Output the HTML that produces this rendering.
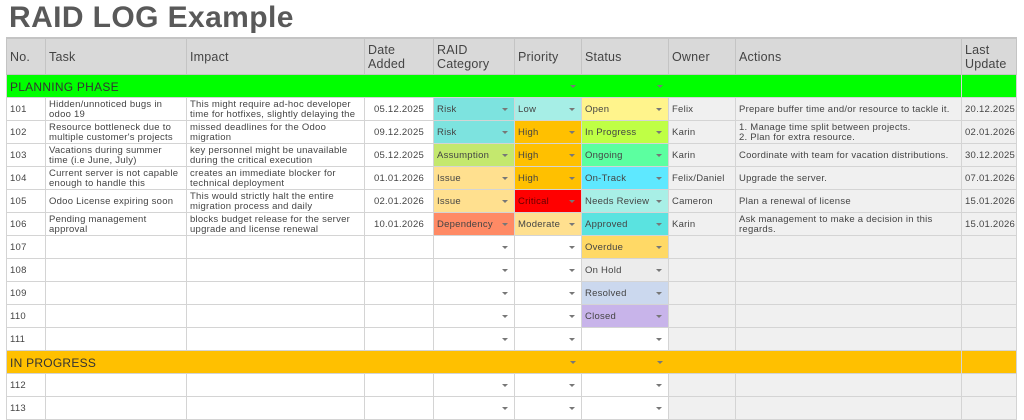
<!DOCTYPE html>
<html><head><meta charset="utf-8"><style>
*{margin:0;padding:0;box-sizing:border-box}
body{width:1024px;height:419px;overflow:hidden;background:#fff;font-family:"Liberation Sans",sans-serif;color:#444}
h1{position:absolute;left:9px;top:1px;font-size:30px;font-weight:bold;color:#595959;letter-spacing:0.4px}
table{position:absolute;left:6px;top:37px;border-collapse:collapse;table-layout:fixed;width:1010px;font-size:9.5px;letter-spacing:0.25px}
td,th{border:1px solid #d4d4d4;height:23px;padding:2px 3px 0;overflow:hidden;white-space:nowrap;position:relative;line-height:10px;color:#444;vertical-align:middle}
th{background:#d9d9d9;font-weight:normal;text-align:left;font-size:12.5px;line-height:14px;height:36px;border:1px solid #c4c4c4;border-top:2px solid #c4c4c4;color:#444;letter-spacing:0.2px;padding-top:1px}
.g td{background:#00ff00;font-size:12px;color:#333}
.o td{background:#ffc000;font-size:12px;color:#333}
.gr{background:#f0f0f0}
.dt{text-align:center}
.dd:after{content:"";position:absolute;right:6px;top:10px;border-left:3px solid transparent;border-right:3px solid transparent;border-top:3px solid #777}
</style></head><body>
<h1>RAID LOG Example</h1>
<table>
<colgroup><col style="width:39px"><col style="width:141px"><col style="width:178px"><col style="width:69px"><col style="width:81px"><col style="width:67px"><col style="width:87px"><col style="width:67px"><col style="width:226px"><col style="width:55px"></colgroup>
<tr><th>No.</th><th>Task</th><th>Impact</th><th>Date<br>Added</th><th>RAID<br>Category</th><th>Priority</th><th>Status</th><th>Owner</th><th>Actions</th><th>Last<br>Update</th></tr>
<tr class="g"><td colspan="5" style="border-right:none">PLANNING PHASE</td><td class="dd" style="border:none"></td><td class="dd" style="border:none"></td><td colspan="2" style="border-left:none"></td><td></td></tr>
<tr><td>101</td><td>Hidden/unnoticed bugs in<br>odoo 19</td><td>This might require ad-hoc developer<br>time for hotfixes, slightly delaying the</td><td class="dt">05.12.2025</td><td class="dd" style="background:#7de3df">Risk</td><td class="dd" style="background:#a6eee6">Low</td><td class="dd" style="background:#fff48c">Open</td><td class="gr">Felix</td><td class="gr">Prepare buffer time and/or resource to tackle it.</td><td class="gr">20.12.2025</td></tr>
<tr><td>102</td><td>Resource bottleneck due to<br>multiple customer's projects</td><td>missed deadlines for the Odoo<br>migration</td><td class="dt">09.12.2025</td><td class="dd" style="background:#7de3df">Risk</td><td class="dd" style="background:#ffc000">High</td><td class="dd" style="background:#bfff45">In Progress</td><td class="gr">Karin</td><td class="gr">1. Manage time split between projects.<br>2. Plan for extra resource.</td><td class="gr">02.01.2026</td></tr>
<tr><td>103</td><td>Vacations during summer<br>time (i.e June, July)</td><td>key personnel might be unavailable<br>during the critical execution</td><td class="dt">05.12.2025</td><td class="dd" style="background:#c4e86e">Assumption</td><td class="dd" style="background:#ffc000">High</td><td class="dd" style="background:#5cffa0">Ongoing</td><td class="gr">Karin</td><td class="gr">Coordinate with team for vacation distributions.</td><td class="gr">30.12.2025</td></tr>
<tr><td>104</td><td>Current server is not capable<br>enough to handle this</td><td>creates an immediate blocker for<br>technical deployment</td><td class="dt">01.01.2026</td><td class="dd" style="background:#ffe08f">Issue</td><td class="dd" style="background:#ffc000">High</td><td class="dd" style="background:#5ee8ff">On-Track</td><td class="gr">Felix/Daniel</td><td class="gr">Upgrade the server.</td><td class="gr">07.01.2026</td></tr>
<tr><td>105</td><td>Odoo License expiring soon</td><td>This would strictly halt the entire<br>migration process and daily</td><td class="dt">02.01.2026</td><td class="dd" style="background:#ffe08f">Issue</td><td class="dd" style="background:#ff0000;color:#600">Critical</td><td class="dd" style="background:#a8efe6">Needs Review</td><td class="gr">Cameron</td><td class="gr">Plan a renewal of license</td><td class="gr">15.01.2026</td></tr>
<tr><td>106</td><td>Pending management<br>approval</td><td>blocks budget release for the server<br>upgrade and license renewal</td><td class="dt">10.01.2026</td><td class="dd" style="background:#ff8a65">Dependency</td><td class="dd" style="background:#ffe08f">Moderate</td><td class="dd" style="background:#5ae3e0">Approved</td><td class="gr">Karin</td><td class="gr">Ask management to make a decision in this<br>regards.</td><td class="gr">15.01.2026</td></tr>
<tr><td>107</td><td></td><td></td><td></td><td class="dd"></td><td class="dd"></td><td class="dd" style="background:#ffd966">Overdue</td><td class="gr"></td><td class="gr"></td><td class="gr"></td></tr>
<tr><td>108</td><td></td><td></td><td></td><td class="dd"></td><td class="dd"></td><td class="dd" style="background:#ececec">On Hold</td><td class="gr"></td><td class="gr"></td><td class="gr"></td></tr>
<tr><td>109</td><td></td><td></td><td></td><td class="dd"></td><td class="dd"></td><td class="dd" style="background:#cbd8ee">Resolved</td><td class="gr"></td><td class="gr"></td><td class="gr"></td></tr>
<tr><td>110</td><td></td><td></td><td></td><td class="dd"></td><td class="dd"></td><td class="dd" style="background:#c8b4ea">Closed</td><td class="gr"></td><td class="gr"></td><td class="gr"></td></tr>
<tr><td>111</td><td></td><td></td><td></td><td class="dd"></td><td class="dd"></td><td class="dd"></td><td class="gr"></td><td class="gr"></td><td class="gr"></td></tr>
<tr class="o"><td colspan="5" style="border-right:none">IN PROGRESS</td><td class="dd" style="border:none"></td><td class="dd" style="border:none"></td><td colspan="2" style="border-left:none"></td><td></td></tr>
<tr><td>112</td><td></td><td></td><td></td><td class="dd"></td><td class="dd"></td><td class="dd"></td><td class="gr"></td><td class="gr"></td><td class="gr"></td></tr>
<tr><td>113</td><td></td><td></td><td></td><td class="dd"></td><td class="dd"></td><td class="dd"></td><td class="gr"></td><td class="gr"></td><td class="gr"></td></tr>
</table>
</body></html>
